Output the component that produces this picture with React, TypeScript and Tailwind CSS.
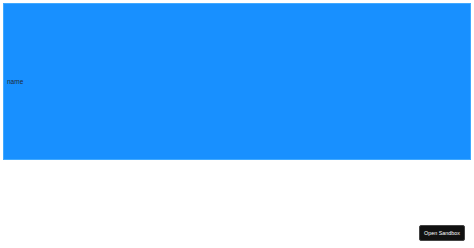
export default function App() {
  return (
    <div className="relative h-[248px] w-[474px] bg-white font-['Liberation_Sans',sans-serif]">
      <div className="p-[3px]">
        <div className="flex h-[157px] items-center border border-[#40a9ff] bg-[#1890ff] px-[3px] pt-[2px]">
          <span className="text-[6.5px] leading-none text-[#1f2937]">name</span>
        </div>
      </div>
      <button className="absolute bottom-[7px] right-[9px] rounded-[2px] border border-[#444] bg-[#111] px-[4px] py-[3px] text-[5.4px] leading-[8px] text-white">
        Open Sandbox
      </button>
    </div>
  );
}
